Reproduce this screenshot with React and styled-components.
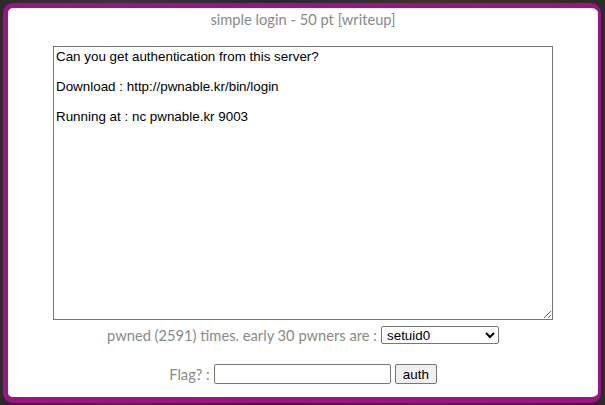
import React from "react";
import styled, { createGlobalStyle } from "styled-components";

const Global = createGlobalStyle`
  html, body { margin: 0; padding: 0; }
  body {
    width: 605px;
    height: 405px;
    overflow: hidden;
    background: linear-gradient(90deg, #2e2a2c 0%, #3b3438 20%, #262a2c 45%, #3a3432 70%, #2b2a28 100%);
  }
`;

const Frame = styled.div`
  box-sizing: border-box;
  margin: 3px 0 0 3px;
  width: 598px;
  height: 400px;
  background: #ffffff;
  border-style: solid;
  border-color: #9b1487;
  border-width: 5px 3px 6px 5px;
  border-radius: 10px;
  display: flex;
  flex-direction: column;
  align-items: center;
`;

const Title = styled.div`
  font-family: Lato, "Open Sans", sans-serif;
  font-size: 14.7px;
  line-height: 18px;
  color: #8a8a8a;
  margin-top: 2px;
  height: 18px;
`;

const Description = styled.textarea`
  box-sizing: border-box;
  margin-top: 18px;
  width: 500px;
  height: 274px;
  padding: 2px;
  border: 1px solid #767676;
  border-radius: 0;
  font-family: "Liberation Sans", Arial, sans-serif;
  font-size: 13.4px;
  line-height: 15px;
  color: #000;
  resize: both;
  outline: none;
`;

const Row = styled.div`
  display: flex;
  align-items: center;
  gap: ${(p) => p.$gap || 4}px;
  margin-top: ${(p) => p.$top}px;
`;

const Label = styled.span`
  font-family: Lato, "Open Sans", sans-serif;
  font-size: 14.7px;
  color: #8a8a8a;
`;

const Select = styled.select`
  box-sizing: border-box;
  width: 118px;
  height: 18px;
  border: 1px solid #767676;
  border-radius: 2px;
  background: #fff;
  font-family: "Liberation Sans", Arial, sans-serif;
  font-size: 13.4px;
  color: #000;
  padding: 0 0 0 1px;
`;

const FlagInput = styled.input`
  box-sizing: border-box;
  width: 177px;
  height: 20px;
  border: 1px solid #767676;
  border-radius: 2px;
  padding: 1px 2px;
  font-family: "Liberation Sans", Arial, sans-serif;
  font-size: 13px;
`;

const AuthButton = styled.button`
  box-sizing: border-box;
  width: 42px;
  height: 20px;
  border: 1px solid #767676;
  border-radius: 2px;
  background: #efefef;
  font-family: "Liberation Sans", Arial, sans-serif;
  font-size: 13.4px;
  color: #000;
  padding: 0;
`;

const text = `Can you get authentication from this server?

Download : http://pwnable.kr/bin/login

Running at : nc pwnable.kr 9003`;

export default function App() {
  return (
    <>
      <Global />
      <Frame>
        <Title>simple login - 50 pt [writeup]</Title>
        <Description defaultValue={text} readOnly />
        <Row $top={6} $gap={4}>
          <Label>pwned (2591) times. early 30 pwners are :</Label>
          <Select defaultValue="setuid0">
            <option>setuid0</option>
          </Select>
        </Row>
        <Row $top={20} $gap={4}>
          <Label>Flag? :</Label>
          <FlagInput />
          <AuthButton>auth</AuthButton>
        </Row>
      </Frame>
    </>
  );
}
